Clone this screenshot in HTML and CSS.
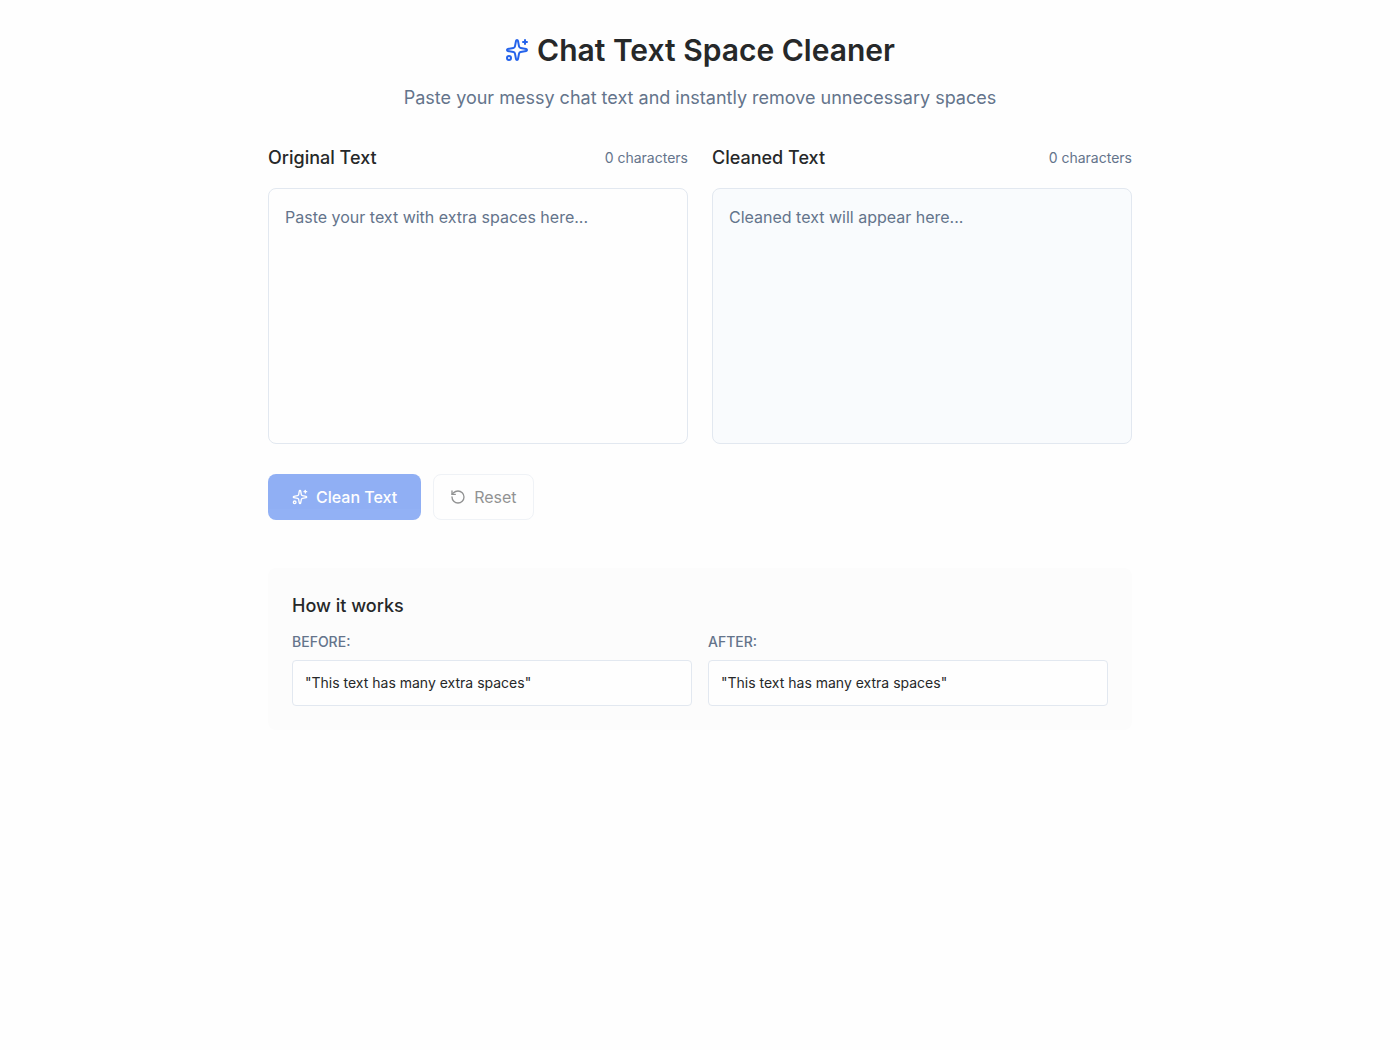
FILE: index.html
```html
<!DOCTYPE html>
<html lang="en">
<head>
<meta charset="UTF-8">
<meta name="viewport" content="width=device-width, initial-scale=1.0">
<title>Chat Text Space Cleaner</title>
<link rel="stylesheet" href="styles.css">
</head>
<body>
<!-- Shared icons -->
<svg class="icon-defs" aria-hidden="true">
    <symbol id="sparkles" viewBox="0 0 24 24">
        <path d="M11.017 2.814a1 1 0 0 1 1.966 0l1.051 5.558a2 2 0 0 0 1.594 1.594l5.558 1.051a1 1 0 0 1 0 1.966l-5.558 1.051a2 2 0 0 0-1.594 1.594l-1.051 5.558a1 1 0 0 1-1.966 0l-1.051-5.558a2 2 0 0 0-1.594-1.594l-5.558-1.051a1 1 0 0 1 0-1.966l5.558-1.051a2 2 0 0 0 1.594-1.594z"/>
        <path d="M20 2v4"/>
        <path d="M22 4h-4"/>
        <circle cx="4" cy="20" r="2"/>
    </symbol>
    <symbol id="rotate" viewBox="0 0 24 24">
        <path d="M3 12a9 9 0 1 0 9-9 9.75 9.75 0 0 0-6.74 2.74L3 8"/>
        <path d="M3 3v5h5"/>
    </symbol>
</svg>
<main class="container">
    <header class="header">
        <h1><svg class="icon icon-large" aria-hidden="true"><use href="#sparkles"/></svg>Chat Text Space Cleaner</h1>
        <p>Paste your messy chat text and instantly remove unnecessary spaces</p>
    </header>

    <div class="editors">
        <section>
            <div class="editor-head">
                <label for="original">Original Text</label>
                <span class="count" id="original-count">0 characters</span>
            </div>
            <textarea id="original" placeholder="Paste your text with extra spaces here..."></textarea>
        </section>
        <section>
            <div class="editor-head">
                <label for="cleaned">Cleaned Text</label>
                <span class="count" id="cleaned-count">0 characters</span>
            </div>
            <textarea id="cleaned" class="output" placeholder="Cleaned text will appear here..." readonly></textarea>
        </section>
    </div>

    <div class="actions">
        <button type="button" class="btn btn-primary" id="clean" disabled><svg class="icon" aria-hidden="true"><use href="#sparkles"/></svg>Clean Text</button>
        <button type="button" class="btn btn-outline" id="reset" disabled><svg class="icon" aria-hidden="true"><use href="#rotate"/></svg>Reset</button>
    </div>

    <section class="how">
        <h2>How it works</h2>
        <div class="examples">
            <div>
                <h3>BEFORE:</h3>
                <div class="sample">"This   text    has   many    extra   spaces"</div>
            </div>
            <div>
                <h3>AFTER:</h3>
                <div class="sample">"This text has many extra spaces"</div>
            </div>
        </div>
    </section>
</main>
<script src="script.js"></script>
</body>
</html>
```

FILE: styles.css
```css
* {
    box-sizing: border-box;
    margin: 0;
    padding: 0;
}
body {
    background: #fefefe;
    color: #262829;
    font-family: Inter, "Liberation Sans", sans-serif;
    font-size: 16px;
    line-height: 24px;
}
.container {
    max-width: 896px;
    margin: 0 auto;
    padding: 32px 16px;
}
.icon-defs {
    display: none;
}
.icon {
    width: 16px;
    height: 16px;
    flex-shrink: 0;
    fill: none;
    stroke: currentColor;
    stroke-width: 2;
    stroke-linecap: round;
    stroke-linejoin: round;
}
.icon-large {
    width: 24px;
    height: 24px;
    color: #2563eb;
}
.header {
    text-align: center;
    margin-bottom: 32px;
}
.header h1 {
    display: flex;
    align-items: center;
    justify-content: center;
    gap: 8px;
    margin-bottom: 16px;
    font-size: 30px;
    font-weight: 600;
    line-height: 36px;
}
.header p {
    color: #64748b;
    font-size: 18px;
    line-height: 28px;
}
.editors {
    display: grid;
    grid-template-columns: 1fr 1fr;
    gap: 24px;
    margin-bottom: 30px;
}
.editor-head {
    display: flex;
    align-items: center;
    justify-content: space-between;
    margin-bottom: 16px;
}
.editor-head label, .how h2 {
    font-size: 18px;
    font-weight: 500;
    line-height: 28px;
}
.count {
    color: #64748b;
    font-size: 14px;
    line-height: 20px;
}
textarea {
    display: block;
    width: 100%;
    height: 256px;
    padding: 16px;
    border: 1px solid #e2e8f0;
    border-radius: 8px;
    background: #fefefe;
    color: inherit;
    font: inherit;
    resize: none;
}
textarea::placeholder {
    color: #64748b;
    opacity: 1;
}
.output {
    background: #f9fbfd;
}
.actions {
    display: flex;
    gap: 12px;
    margin-bottom: 48px;
}
.btn {
    display: flex;
    align-items: center;
    gap: 8px;
    padding: 10px 16px;
    border: 1px solid #e2e8f0;
    border-radius: 8px;
    background: #fefefe;
    color: inherit;
    font: inherit;
    cursor: pointer;
}
.btn-primary {
    padding: 11px 24px;
    border: none;
    background: #2563eb;
    color: #fff;
    font-weight: 500;
}
.btn:disabled {
    opacity: 0.5;
    cursor: not-allowed;
}
.how {
    padding: 24px;
    border-radius: 8px;
    background: #fcfcfc;
}
.how h2 {
    margin-bottom: 12px;
}
.examples {
    display: grid;
    grid-template-columns: 1fr 1fr;
    gap: 16px;
    font-size: 14px;
    line-height: 20px;
}
.examples h3 {
    margin-bottom: 8px;
    color: #64748b;
    font-size: 14px;
    font-weight: 500;
}
.sample {
    padding: 12px;
    border: 1px solid #e2e8f0;
    border-radius: 4px;
    background: #fefefe;
}
@media (max-width: 640px) {
    .editors, .examples {
        grid-template-columns: 1fr;
    }
}
```

FILE: script.js
```js
const original = document.getElementById('original');
const cleaned = document.getElementById('cleaned');
const cleanBtn = document.getElementById('clean');
const resetBtn = document.getElementById('reset');

function update() {
    document.getElementById('original-count').textContent = `${original.value.length} characters`;
    document.getElementById('cleaned-count').textContent = `${cleaned.value.length} characters`;
    cleanBtn.disabled = !original.value.trim();
    resetBtn.disabled = !original.value && !cleaned.value;
}
original.addEventListener('input', update);
// Collapse runs of whitespace into a single space
cleanBtn.addEventListener('click', function() {
    cleaned.value = original.value.replace(/\s+/g, ' ').trim();
    update();
});
resetBtn.addEventListener('click', function() {
    original.value = '';
    cleaned.value = '';
    update();
});
update();
```
